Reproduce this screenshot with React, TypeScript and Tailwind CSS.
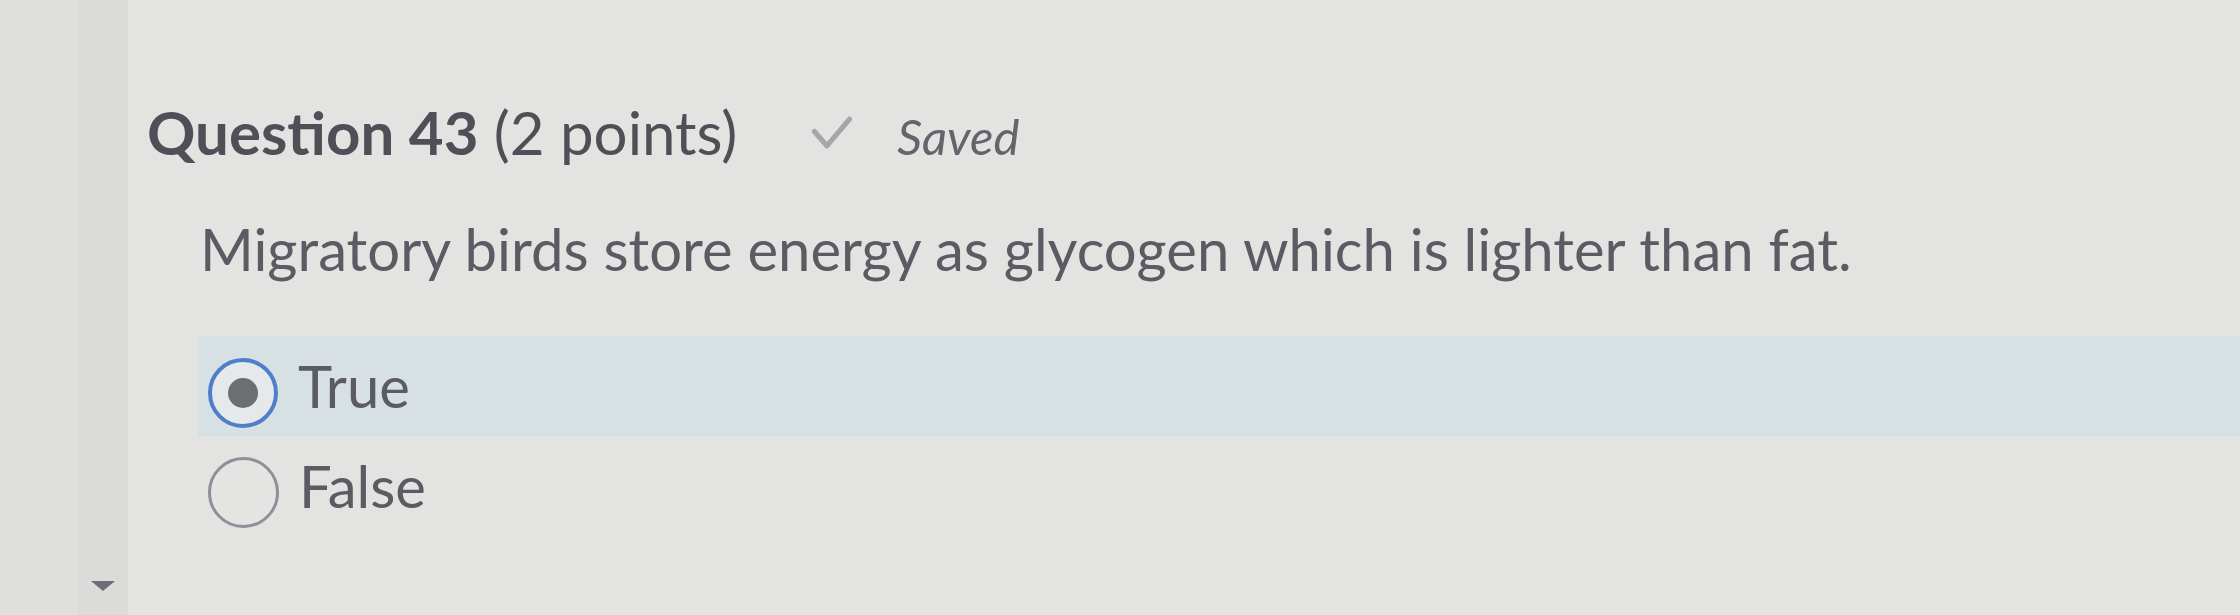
import React from 'react';

type Choice = { label: string; checked: boolean };

const choices: Choice[] = [
  { label: 'True', checked: true },
  { label: 'False', checked: false },
];

const Radio: React.FC<{ checked: boolean }> = ({ checked }) => (
  <span
    className={
      checked
        ? 'flex h-[70px] w-[70px] shrink-0 translate-y-[7px] items-center justify-center rounded-full border-[4px] border-[#4f7ecb] bg-[#e6e9eb]'
        : 'flex h-[71px] w-[71px] shrink-0 translate-y-[7px] items-center justify-center rounded-full border-[3px] border-[#8f8f99] bg-[#e4e4e2]'
    }
  >
    {checked && <span className="h-[30px] w-[30px] rounded-full bg-[#6c6e72]" />}
  </span>
);

export default function App() {
  return (
    <div className="flex h-[615px] w-[2240px] overflow-hidden bg-[#e3e3e1] font-['Lato',sans-serif] text-[#5a5b63]">
      {/* course nav edge */}
      <div className="w-[78px] bg-[#dfdfdd]" />
      <div className="flex w-[50px] flex-col items-center justify-end bg-[#dbdbd9] pb-[24px]">
        <span className="h-0 w-0 border-x-[12px] border-t-[10px] border-x-transparent border-t-[#6d6e75]" />
      </div>

      <main className="flex-1 pl-[19px] pt-[96px]">
        <header className="flex items-baseline">
          <h2 className="text-[60px] leading-[1.2] text-[#4f5057]">
            <span className="font-bold">Question 43</span> (2 points)
          </h2>
          <svg
            viewBox="0 0 40 32"
            className="ml-[74px] h-[33px] w-[42px] self-center"
            fill="none"
            stroke="#a3a7a9"
            strokeWidth="5"
            strokeLinecap="round"
            strokeLinejoin="round"
          >
            <path d="M3 15 L15 29 L37 3" />
          </svg>
          <span className="ml-[44px] text-[49px] italic leading-[1.2] text-[#64656c]">Saved</span>
        </header>

        <p className="ml-[53px] mt-[46px] text-[58px] leading-[1.2]">
          Migratory birds store energy as glycogen which is lighter than fat.
        </p>

        <div className="ml-[51px] mt-[52px] flex flex-col">
          {choices.map((c) => (
            <label
              key={c.label}
              className={
                c.checked
                  ? 'flex h-[100px] items-center gap-[20px] bg-[#d7e0e3] pl-[10px]'
                  : 'flex h-[100px] items-center gap-[20px] pl-[10px]'
              }
            >
              <Radio checked={c.checked} />
              <span className="text-[58px] leading-[1.2]">{c.label}</span>
            </label>
          ))}
        </div>
      </main>
    </div>
  );
}
